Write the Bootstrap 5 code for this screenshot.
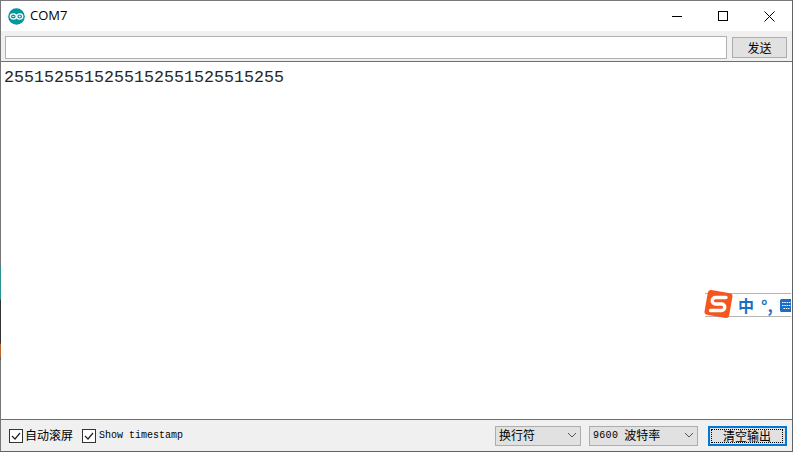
<!DOCTYPE html>
<html lang="zh">
<head>
<meta charset="utf-8">
<title>COM7</title>
<link href="https://cdn.jsdelivr.net/npm/bootstrap@5.3.0/dist/css/bootstrap.min.css" rel="stylesheet">
<style>
html,body{height:452px;overflow:hidden;background:#fff}
body{font-family:"Noto Sans CJK SC","Liberation Sans",sans-serif;color:#000}
.win{height:452px;border:1px solid #5f6468;border-top-color:#7a7a7a;border-left-color:#777;position:relative}
.titlebar{height:30px;background:#fff;padding-left:7px;flex:none}
.title-text{font-family:"Open Sans","Liberation Sans",sans-serif;font-size:13px;margin-left:5px;margin-top:-1px}
.winbtn{width:46px;height:30px}
.sendrow{height:31px;background:#f0f0f0;padding:5px 5px 0 4px;border-bottom:1px solid #6e6e6e;flex:none}
.sendinput{flex:1;height:23px;background:#fff;border:1px solid #b0b0b0;margin-right:5px}
.winbutton{height:21px;width:55px;background:#e1e1e1;border:1px solid #adadad;font-size:12px;line-height:17px;text-align:center;padding:0;border-radius:0;color:#000;margin-top:1px}
.outarea{flex:1;background:#fff;font-family:"Liberation Mono",monospace;font-size:16.67px;line-height:18px;padding:7px 3px 3px;color:#262626}
.footbar{height:32px;background:#f0f0f0;border-top:1px solid #6e6e6e;padding-left:8px;padding-right:5px;font-size:12px;flex:none}
.chk{width:14px;height:14px;border:1px solid #333;background:#fff;display:block}
.chk-two{margin-left:9px}
.lab{font-size:12px;margin-left:2px;line-height:14px;margin-top:-1px}
.monolab{font-family:"Liberation Mono",monospace;font-size:10px;margin-left:3px;margin-top:-1px}
.combo{height:20px;background:#e1e1e1;border:1px solid #adadad;font-size:12px;padding:0 3px 1px;color:#000}
.combo-a{width:86px;margin-right:8px}
.combo-b{width:109px;margin-right:10px}
.m9{font-family:"Liberation Mono",monospace;font-size:10px;letter-spacing:.3px;margin-right:6px}
.clearbtn{width:79px;height:20px;background:#e1e1e1;border:2px solid #0078d7;font-size:12px;line-height:11px;padding:1px 2px 1px 1px;border-radius:0;color:#000}
.clearin{display:block;border:1px dotted #000;height:14px;text-align:center}
.imebar{position:absolute;left:705px;top:293px;width:86px;height:24px;background:#fff;border-top:1px solid #b4b4b4;border-bottom:1px solid #b4b4b4;padding-left:33px;overflow:hidden}
.imeicon{position:absolute;left:703px;top:289px;width:31px;height:30px}
.imezh{color:#1a6fc4;font-size:16px;font-weight:700;line-height:20px;flex:none}
.imedot{color:#1a6fc4;font-size:16px;font-weight:700;line-height:18px;margin-left:7px;white-space:nowrap;flex:none}
.imekb{margin-left:7px;flex:none}
.edge-l{position:absolute;left:0;top:265px;width:1px;height:95px;background:linear-gradient(#2a8f8f 0,#2a8f8f 36%,#333 37%,#333 82%,#c0642e 84%,#c0642e 95%,#555 100%)}
</style>
</head>
<body>
<div class="win d-flex flex-column">
  <div class="titlebar d-flex align-items-center">
    <svg width="17" height="17" viewBox="0 0 17 17"><circle cx="8.5" cy="8.5" r="8.300" fill="#00979c"/><ellipse cx="5.300" cy="8.500" rx="3" ry="2.600" fill="none" stroke="#fff" stroke-width="1.300"/><ellipse cx="11.700" cy="8.500" rx="3" ry="2.600" fill="none" stroke="#fff" stroke-width="1.300"/><path d="M4.200 8.500h2.200M10.600 8.500h2.200M11.700 7.400v2.200" stroke="#fff" stroke-width=".8"/></svg>
    <span class="title-text flex-grow-1">COM7</span>
    <div class="winbtn d-flex align-items-center justify-content-center"><svg width="10" height="10" viewBox="0 0 10 10"><path d="M0 5.500h10" stroke="#000"/></svg></div>
    <div class="winbtn d-flex align-items-center justify-content-center"><svg width="10" height="10" viewBox="0 0 10 10"><rect x=".5" y=".5" width="9" height="9" fill="none" stroke="#000"/></svg></div>
    <div class="winbtn d-flex align-items-center justify-content-center"><svg width="11" height="11" viewBox="0 0 11 11"><path d="M.5.5l10 10M10.500.5l-10 10" stroke="#000" fill="none"/></svg></div>
  </div>
  <div class="sendrow d-flex align-items-start">
    <div class="sendinput"></div>
    <button type="button" class="winbutton">发送</button>
  </div>
  <div class="outarea">2551525515255152551525515255</div>
  <div class="footbar d-flex align-items-center">
    <span class="chk"><svg width="12" height="12" viewBox="0 0 12 12" class="d-block"><path d="M2 6l3 3 5-6" stroke="#222" stroke-width="1.200" fill="none"/></svg></span>
    <span class="lab">自动滚屏</span>
    <span class="chk chk-two"><svg width="12" height="12" viewBox="0 0 12 12" class="d-block"><path d="M2 6l3 3 5-6" stroke="#222" stroke-width="1.200" fill="none"/></svg></span>
    <span class="monolab flex-grow-1">Show timestamp</span>
    <div class="combo combo-a d-flex align-items-center justify-content-between"><span>换行符</span><svg width="10" height="6" viewBox="0 0 10 6"><path d="M1 1l4 4 4-4" stroke="#555" fill="none"/></svg></div>
    <div class="combo combo-b d-flex align-items-center"><span class="m9">9600</span><span class="flex-grow-1">波特率</span><svg width="10" height="6" viewBox="0 0 10 6"><path d="M1 1l4 4 4-4" stroke="#555" fill="none"/></svg></div>
    <button type="button" class="clearbtn"><span class="clearin">清空输出</span></button>
  </div>
</div>
<div class="edge-l"></div>
<div class="imebar d-flex align-items-center">
  <span class="imezh">中</span><span class="imedot">°,</span>
  <svg class="imekb" width="13" height="15" viewBox="0 0 13 15"><rect x="0" y="1" width="13" height="13" rx="1.500" fill="#1a6fc4"/><path d="M2 4.500h9M2 7.500h9M3.500 10.500h6" stroke="#fff" stroke-width="1.200" stroke-dasharray="1.500 .8"/></svg>
</div>
<svg class="imeicon" viewBox="0 0 31 30"><rect x="3" y="2.500" width="25" height="25" rx="3" fill="#f4561e" transform="rotate(10 15.500 15)"/><path d="M23 8.500H12.500a3 3 0 0 0 0 6.500h6a3 3 0 0 1 0 6.500H7.500" stroke="#fff" stroke-width="3.400" fill="none" stroke-linecap="round"/></svg>
</body>
</html>
